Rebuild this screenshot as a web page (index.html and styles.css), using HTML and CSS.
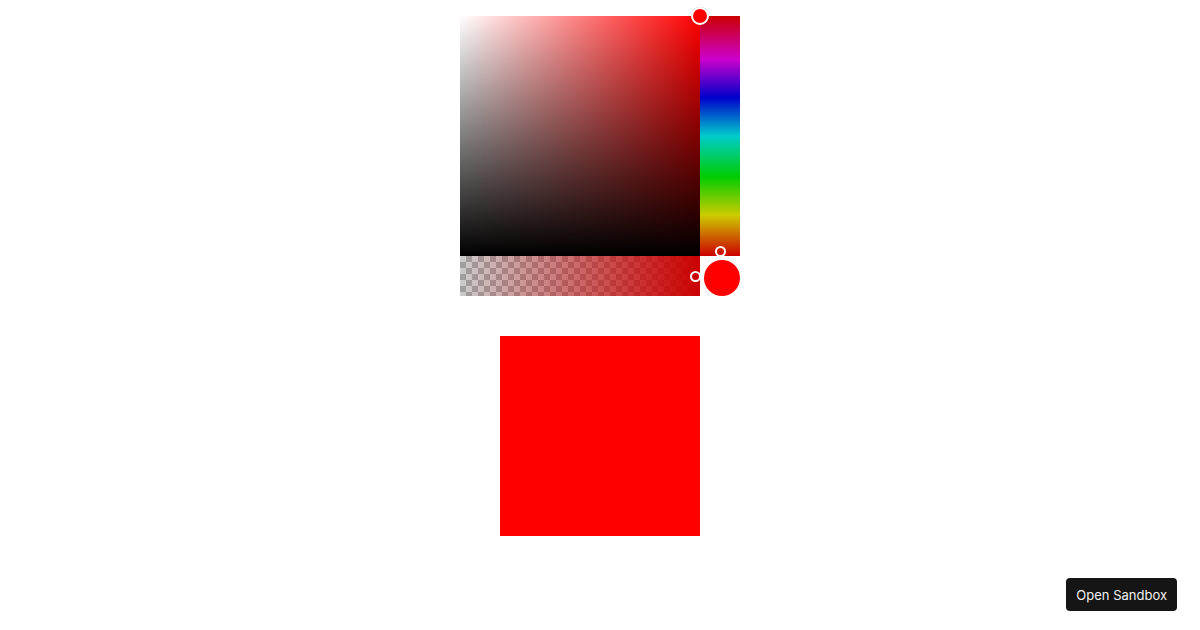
FILE: index.html
```html
<!DOCTYPE html>
<html>
<head>
<meta charset="utf-8">
<link rel="stylesheet" href="styles.css">
</head>
<body>
<main class="page">
  <div class="picker">
    <div class="sat">
      <div class="sat-dark"></div>
      <span class="handle sat-handle"></span>
    </div>
    <div class="hue">
      <span class="handle small hue-handle"></span>
    </div>
    <div class="alpha">
      <div class="alpha-grad"></div>
      <span class="handle small alpha-handle"></span>
    </div>
    <div class="swatch-cell">
      <div class="swatch"></div>
    </div>
  </div>
  <div class="preview"></div>
</main>
<button class="sandbox">Open Sandbox</button>
</body>
</html>
```
FILE: styles.css
```css
html, body { margin: 0; padding: 0; background: #fff; }
body { font-family: Inter, "Liberation Sans", sans-serif; }
.page {
  display: flex;
  flex-direction: column;
  align-items: center;
  padding-top: 16px;
  gap: 40px;
}
.picker {
  position: relative;
  display: grid;
  grid-template-columns: 240px 40px;
  grid-template-rows: 240px 40px;
}
.sat {
  position: relative;
  background: linear-gradient(to right, #fff, #f00);
}
.sat-dark {
  position: absolute;
  inset: 0;
  background: linear-gradient(to bottom, rgba(0,0,0,0), #000);
}
.hue {
  position: relative;
  background: linear-gradient(to bottom, #cc0000 0%, #cc00cc 18%, #0000cc 34%, #00cccc 50%, #00cc00 67%, #cccc00 83%, #cc0000 100%);
}
.alpha {
  position: relative;
  background-image:
    linear-gradient(45deg, #a0a0a0 25%, transparent 25%, transparent 75%, #a0a0a0 75%),
    linear-gradient(45deg, #a0a0a0 25%, transparent 25%, transparent 75%, #a0a0a0 75%);
  background-size: 12px 12px;
  background-position: 0 0, 6px 6px;
  background-color: #cdcdcd;
}
.alpha-grad {
  position: absolute;
  inset: 0;
  background: linear-gradient(to right, rgba(204,0,0,0), #cc0000);
}
.swatch-cell {
  display: flex;
  align-items: flex-end;
  justify-content: flex-end;
}
.swatch {
  width: 36px;
  height: 36px;
  border-radius: 50%;
  background: #f00;
}
.handle {
  position: absolute;
  box-sizing: border-box;
  border-radius: 50%;
  border: 2px solid #fff;
  z-index: 2;
}
.sat-handle {
  width: 18px;
  height: 18px;
  right: -9px;
  top: -9px;
  background: #f00;
  box-shadow: 0 0 1px rgba(0,0,0,0.3);
}
.small {
  width: 11px;
  height: 11px;
  background: transparent;
}
.hue-handle {
  left: 14.5px;
  bottom: -0.5px;
}
.alpha-handle {
  right: -0.5px;
  top: 14.5px;
}
.preview {
  width: 200px;
  height: 200px;
  background: #f00;
}
.sandbox {
  position: fixed;
  right: 23px;
  bottom: 19px;
  height: 33px;
  padding: 0 10px;
  border: 0;
  border-radius: 4px;
  background: #151515;
  color: #f2f2f2;
  font-family: Inter, "Liberation Sans", sans-serif;
  font-size: 13px;
}
```
